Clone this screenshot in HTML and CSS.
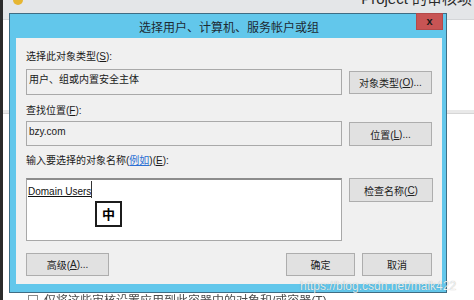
FILE: index.html
```html
<!DOCTYPE html>
<html lang="zh-CN">
<head>
  <meta charset="UTF-8" />
  <title>选择用户、计算机、服务帐户或组</title>
  <link rel="stylesheet" href="styles.css">
</head>
<body>
  <div class="desk">

    <div class="bgwin">
      <div class="bgwin-head">
        <span class="app-icon"></span>
        <span class="bgwin-title">Project 的审核项</span>
      </div>
      <div class="bgwin-rule"></div>
      <div class="bgwin-check"><span class="cb"></span>仅将这些审核设置应用到此容器中的对象和/或容器(T)</div>
    </div>

    <div class="dialog">
      <div class="titlebar">
        选择用户、计算机、服务帐户或组
        <div class="close">x</div>
      </div>

      <div class="content">
        <div class="label">选择此对象类型(<u>S</u>):</div>
        <div class="row row-type">
          <div class="field">用户、组或内置安全主体</div>
          <div class="btn">对象类型(<u>O</u>)...</div>
        </div>

        <div class="label label-loc">查找位置(<u>F</u>):</div>
        <div class="row row-loc">
          <div class="field field-loc">bzy.com</div>
          <div class="btn">位置(<u>L</u>)...</div>
        </div>

        <div class="label label-name">输入要选择的对象名称(<a class="link">例如</a>)(<u>E</u>):</div>
        <div class="row row-name">
          <div class="field field-name">
            <div class="entry"><span class="resolved">Domain Users</span><span class="caret"></span></div>
            <div class="ime">中</div>
          </div>
          <div class="btn btn-check">检查名称(<u>C</u>)</div>
        </div>

        <div class="footer">
          <div class="btn">高级(<u>A</u>)...</div>
          <div class="btn btn-ok">确定</div>
          <div class="btn btn-cancel">取消</div>
        </div>
      </div>
    </div>

    <div class="watermark">https://blog.csdn.net/maik422</div>
  </div>
</body>
</html>
```

FILE: styles.css
```css
body {
  margin: 0;
  font-family: "Liberation Sans", "Noto Sans CJK SC", sans-serif;
  font-size: 10px;
  color: #1a1a1a;
}

.desk {
  position: relative;
  width: 471px;
  height: 300px;
  overflow: hidden;
  border-left: 3px solid #2b2b2b;
  background: #fff;
}

/* window behind the dialog */
.bgwin-head {
  display: flex;
  align-items: flex-start;
  height: 19px;
  background: #e4e6e8;
  border-bottom: 1px solid #d4d6d8;
  overflow: hidden;
}

.app-icon {
  width: 10px;
  height: 10px;
  margin: -5px 0 0 10px;
  border-radius: 50%;
  background: #e6b632;
}

.bgwin-title {
  margin: -9px 0 0 auto;
  padding-right: 2px;
  font-size: 15px;
  line-height: 16px;
  color: #2a2a2a;
  white-space: nowrap;
}

.bgwin-rule {
  height: 3px;
  margin-top: 90px;
  background: #e9e9e9;
  border-bottom: 1px solid #d6d6d6;
}

.bgwin-check {
  display: flex;
  align-items: flex-start;
  gap: 6px;
  margin: 180px 0 0 25px;
  font-size: 12px;
  line-height: 14px;
  color: #4a4a4a;
  white-space: nowrap;
  filter: blur(0.4px);
}

.cb {
  width: 8px;
  height: 8px;
  margin-top: 1px;
  border: 1px solid #8a8a8a;
  background: #fff;
}

/* dialog */
.dialog {
  position: absolute;
  left: 6px;
  top: 13px;
  width: 438px;
  height: 280px;
  box-sizing: border-box;
  padding: 0 4px 8px 6px;
  border: 1px solid #3f6d84;
  background: #62c7eb;
  display: flex;
  flex-direction: column;
}

.titlebar {
  height: 24px;
  display: flex;
  align-items: center;
  justify-content: center;
  font-size: 12px;
  color: #1d2a33;
}

.close {
  position: absolute;
  top: -1px;
  right: 3px;
  width: 27px;
  height: 17px;
  box-sizing: border-box;
  border: 1px solid #b44a4a;
  background: #c85454;
  color: #1a1a1a;
  font-weight: bold;
  font-size: 11px;
  line-height: 14px;
  text-align: center;
}

.content {
  flex: 1;
  background: #f0f0f0;
  padding: 12px 10px 8px;
  display: flex;
  flex-direction: column;
}

.label {
  line-height: 14px;
  white-space: nowrap;
}

.label-loc { margin-top: 9px; }
.label-name { margin-top: 8px; }

.link {
  color: #2b6fd4;
  text-decoration: underline;
}

.row {
  display: flex;
  align-items: flex-start;
  gap: 7px;
}

.row-type { margin-top: 5px; }
.row-loc { margin-top: 3px; }
.row-name { margin-top: 10px; }

.field {
  width: 316px;
  height: 26px;
  flex: none;
  box-sizing: border-box;
  padding: 3px 2px;
  border: 1px solid #a9a9a9;
  background: #f0f0f0;
  line-height: 14px;
  white-space: nowrap;
}

.field-loc { height: 25px; }

.field-name {
  position: relative;
  height: 63px;
  padding: 1px 1px;
  background: #fff;
  border-color: #a8a8a8;
  border-top: 2px solid #8c8c8c;
}

.entry {
  display: flex;
  align-items: flex-end;
  height: 17px;
}

.resolved {
  line-height: 12px;
  text-decoration: underline;
  color: #111;
}

.caret {
  width: 1px;
  height: 17px;
  background: #333;
}

.ime {
  position: absolute;
  left: 68px;
  top: 21px;
  width: 27px;
  height: 26px;
  box-sizing: border-box;
  border: 2px solid #1c1c1c;
  background: #fff;
  display: flex;
  align-items: center;
  justify-content: center;
  font-family: "Noto Sans CJK SC", sans-serif;
  font-size: 13px;
  font-weight: bold;
  color: #000;
}

.btn {
  width: 83px;
  height: 23px;
  flex: none;
  box-sizing: border-box;
  border: 1px solid #adadad;
  background: #e1e1e1;
  display: flex;
  align-items: center;
  justify-content: center;
  color: #222;
  white-space: nowrap;
}

.row-type .btn { margin-top: 2px; }
.row-loc .btn { margin-top: 1px; height: 24px; }
.btn-check { width: 84px; height: 24px; }

.footer {
  display: flex;
  gap: 7px;
  margin-top: 12px;
}

.btn-ok {
  width: 69px;
  margin-left: auto;
}

.btn-cancel { width: 70px; }

.watermark {
  position: absolute;
  left: 297px;
  top: 279px;
  font-size: 12px;
  line-height: 14px;
  color: rgba(255, 255, 255, 0.85);
  text-shadow: 0 0 1px rgba(0, 0, 0, 0.35);
  white-space: nowrap;
}
```
